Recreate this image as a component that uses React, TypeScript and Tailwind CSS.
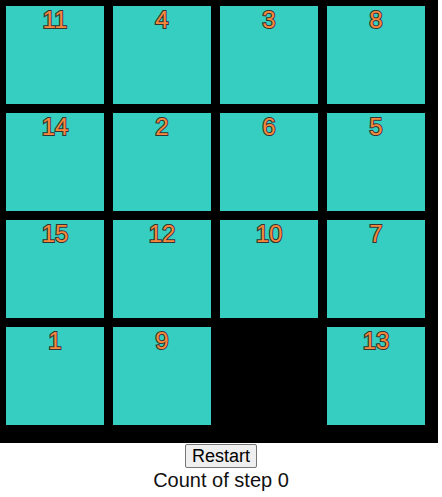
import React, { useState } from "react";

const START = [11, 4, 3, 8, 14, 2, 6, 5, 15, 12, 10, 7, 1, 9, 0, 13];

export default function App() {
  const [tiles, setTiles] = useState<number[]>(START);
  const [steps, setSteps] = useState(0);

  const move = (i: number) => {
    const empty = tiles.indexOf(0);
    const r = Math.floor(i / 4), c = i % 4;
    const er = Math.floor(empty / 4), ec = empty % 4;
    if (Math.abs(r - er) + Math.abs(c - ec) !== 1) return;
    const next = [...tiles];
    next[empty] = next[i];
    next[i] = 0;
    setTiles(next);
    setSteps(steps + 1);
  };

  return (
    <div className="w-[442px] text-center" style={{ fontFamily: '"Liberation Sans", Arial, sans-serif' }}>
      <div className="w-[438px] h-[443px] bg-black pt-[6px] pl-[6px]">
        <div className="grid grid-cols-[repeat(4,98px)] grid-rows-[repeat(4,98px)] gap-[9px]">
          {tiles.map((n, i) =>
            n === 0 ? (
              <div key={i} className="bg-black" />
            ) : (
              <div
                key={i}
                onClick={() => move(i)}
                className="bg-[#36cec1] text-[24px] leading-[24px] pt-[2px] text-[#f7883b] cursor-pointer select-none"
                style={{ WebkitTextStroke: "2px #333", paintOrder: "stroke fill" }}
              >
                {n}
              </div>
            )
          )}
        </div>
      </div>
      <button
        onClick={() => {
          setTiles(START);
          setSteps(0);
        }}
        className="mt-[1px] text-[18px] leading-[20px] px-[6px] py-[1px] bg-[#efefef] border border-[#767676] rounded-[2px] text-black"
      >
        Restart
      </button>
      <div className="text-[20px] leading-[23px] text-[#111]">Count of step {steps}</div>
    </div>
  );
}
